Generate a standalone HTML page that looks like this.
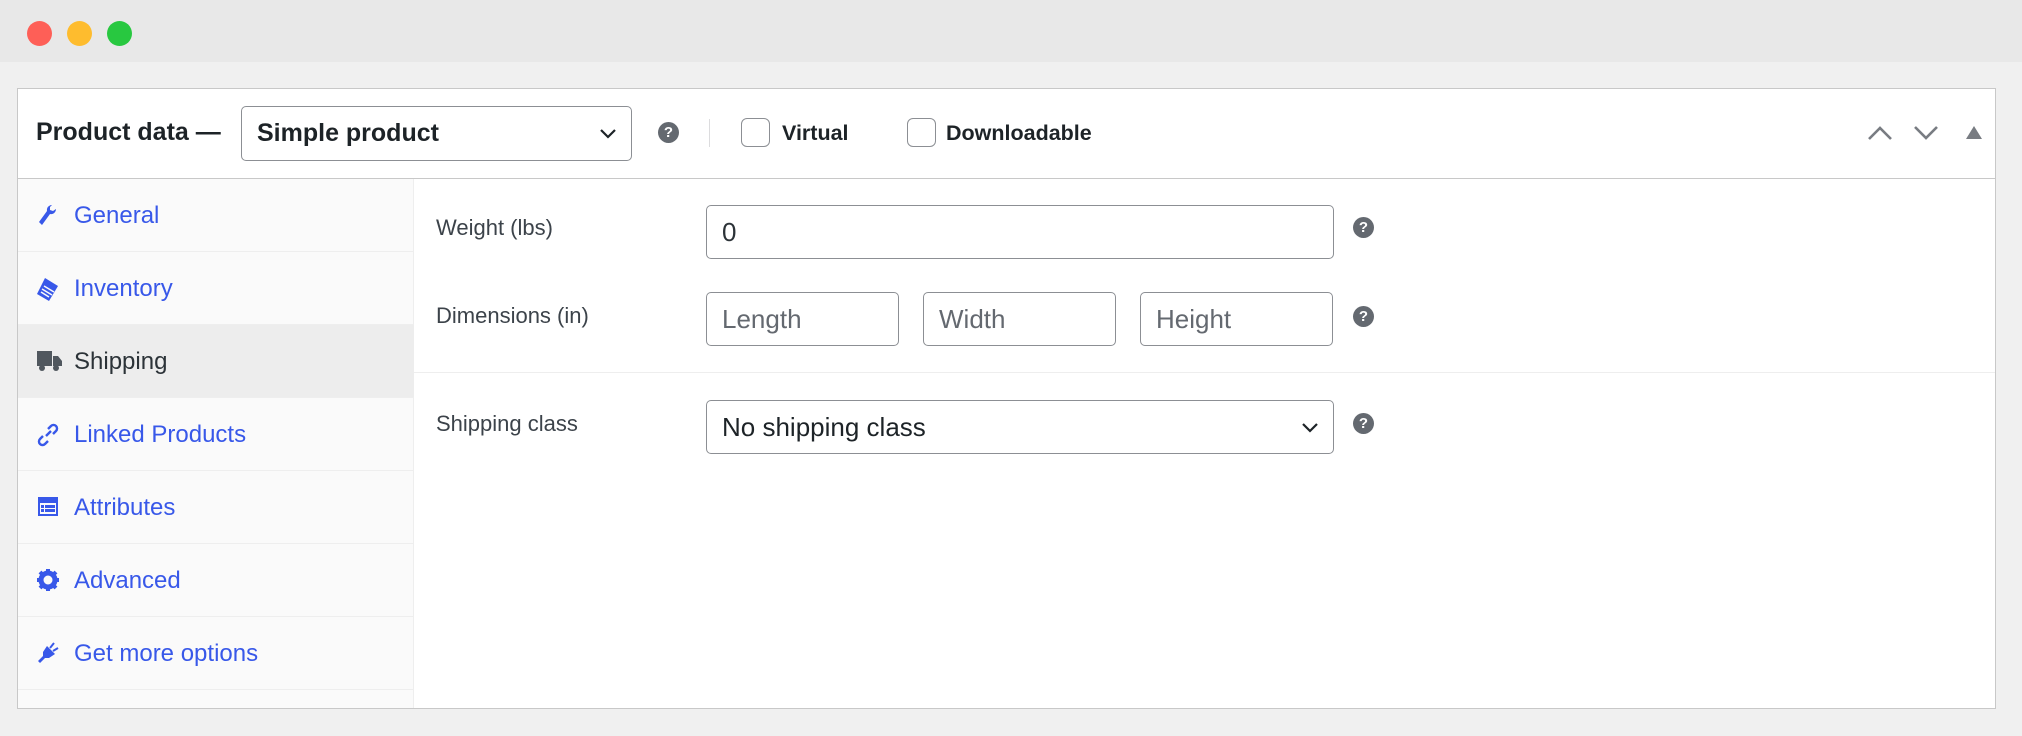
<!DOCTYPE html>
<html><head><style>
*{box-sizing:border-box;margin:0;padding:0}
body{width:2022px;height:736px;background:#f0f0f0;font-family:"Liberation Sans",sans-serif;position:relative;overflow:hidden}
.tb{position:absolute;left:0;top:0;width:2022px;height:62px;background:#e8e8e8}
.dot{position:absolute;top:21px;width:25px;height:25px;border-radius:50%}
.panel{position:absolute;left:17px;top:88px;width:1979px;height:621px;background:#fff;border:1px solid #c8c8c8;overflow:hidden}
.hdr{position:absolute;left:0;top:0;width:100%;height:90px;border-bottom:1px solid #c8c8c8}
.abs{position:absolute}
.side{position:absolute;left:0;top:90px;width:396px;height:530px;background:#fafafa;border-right:1px solid #eee}
.item{position:absolute;left:0;width:396px;height:73px;border-bottom:1px solid #eee;color:#3858e9;font-size:24px;line-height:73px;padding-left:56px}
.item svg{position:absolute;left:19px;top:25px}
.lbl{position:absolute;left:418px;font-size:22px;color:#3c434a}
.inp{position:absolute;border:1px solid #8c8f94;border-radius:5px;font-size:26px;padding-left:15px;color:#2c3338;display:flex;align-items:center}
.ph{color:#646970}
.help{position:absolute;width:21px;height:21px;border-radius:50%;background:#646970;color:#fff;font-size:15px;font-weight:bold;text-align:center;line-height:21px}
.cb{position:absolute;width:29px;height:29px;border:1px solid #8c8f94;border-radius:6px;background:#fff}
</style></head><body>
<div class="tb">
<div class="dot" style="left:27px;background:#fe5f57"></div>
<div class="dot" style="left:67px;background:#febc2e"></div>
<div class="dot" style="left:107px;background:#28c840"></div>
</div>
<div class="panel">
<div class="hdr">
<div class="abs" style="left:18px;top:29px;font-size:25px;font-weight:bold;color:#1d2327">Product data —</div>
<div class="inp" style="left:223px;top:17px;width:391px;height:55px;font-size:25px;color:#1d2327;font-weight:bold">Simple product
<svg class="abs" style="right:14px;top:21px" width="18" height="12" viewBox="0 0 18 12"><path d="M2 2l7 7 7-7" fill="none" stroke="#1d2327" stroke-width="2.2"/></svg></div>
<div class="help" style="left:640px;top:33px">?</div>
<div class="abs" style="left:691px;top:30px;width:1px;height:28px;background:#dcdcde"></div>
<div class="cb" style="left:723px;top:29px"></div>
<div class="abs" style="left:764px;top:32px;font-size:21.5px;font-weight:bold;color:#1d2327">Virtual</div>
<div class="cb" style="left:889px;top:29px"></div>
<div class="abs" style="left:928px;top:32px;font-size:21.5px;font-weight:bold;color:#1d2327">Downloadable</div>
<svg class="abs" style="left:1849px;top:36px" width="26" height="16" viewBox="0 0 26 16"><path d="M2 14L13 3l11 11" fill="none" stroke="#787c82" stroke-width="2.6"/></svg>
<svg class="abs" style="left:1895px;top:36px" width="26" height="16" viewBox="0 0 26 16"><path d="M2 2l11 11L24 2" fill="none" stroke="#787c82" stroke-width="2.6"/></svg>
<svg class="abs" style="left:1948px;top:37px" width="16" height="13" viewBox="0 0 16 13"><path d="M8 0L16 13H0z" fill="#787c82"/></svg>
</div>
<div class="side">
<div class="item" style="top:0"><svg width="20" height="24" viewBox="0 0 20 24"><path d="M15 1a5 5 0 0 0-5 6L2 18l3 3 8-11a5 5 0 0 0 6-5l-3 2-3-1 0-3z" fill="#3858e9"/></svg>General</div>
<div class="item" style="top:73px"><svg width="22" height="26" viewBox="0 0 22 26"><path d="M8 1l13 8-9 15L0 17z" fill="#3858e9"/><path d="M5 12l10 6M7 9l10 6M4 15l8 5" stroke="#fafafa" stroke-width="1.5"/></svg>Inventory</div>
<div class="item" style="top:146px;background:#ededed;color:#2c3338"><svg width="25" height="22" viewBox="0 0 25 22"><path d="M0 1h15v15H0zM16 6h5l4 5v5h-9z" fill="#50575e"/><circle cx="5" cy="18" r="3" fill="#50575e"/><circle cx="19" cy="18" r="3" fill="#50575e"/></svg>Shipping</div>
<div class="item" style="top:219px"><svg width="22" height="24" viewBox="0 0 22 24"><path d="M9 13l5-5M11 6l3-3a3 3 0 0 1 5 5l-3 3M11 18l-3 3a3 3 0 0 1-5-5l3-3" fill="none" stroke="#3858e9" stroke-width="2.4"/></svg>Linked Products</div>
<div class="item" style="top:292px"><svg width="22" height="22" viewBox="0 0 22 22"><rect x="1" y="1" width="20" height="19" fill="#3858e9"/><rect x="3" y="7" width="16" height="11" fill="#fafafa"/><path d="M4 9h3v3H4zM8 9h10v3H8zM4 13h3v3H4zM8 13h10v3H8z" fill="#3858e9"/></svg>Attributes</div>
<div class="item" style="top:365px"><svg width="22" height="22" viewBox="0 0 22 22"><circle cx="11" cy="11" r="7" fill="none" stroke="#3858e9" stroke-width="5"/><path d="M11 0v6M11 16v6M0 11h6M16 11h6M3 3l4 4M15 15l4 4M3 19l4-4M15 7l4-4" stroke="#3858e9" stroke-width="4"/></svg>Advanced</div>
<div class="item" style="top:438px"><svg width="22" height="24" viewBox="0 0 22 24"><path d="M10 4l8 8-6 4-4 0-5 5-2-2 5-5 0-4z" fill="#3858e9"/><path d="M13 6l4-5M16 9l5-3" stroke="#3858e9" stroke-width="2"/></svg>Get more options</div>
</div>
<div class="lbl" style="top:126px">Weight (lbs)</div>
<div class="inp" style="left:688px;top:116px;width:628px;height:54px">0</div>
<div class="help" style="left:1335px;top:128px">?</div>
<div class="lbl" style="top:214px">Dimensions (in)</div>
<div class="inp ph" style="left:688px;top:203px;width:193px;height:54px">Length</div>
<div class="inp ph" style="left:905px;top:203px;width:193px;height:54px">Width</div>
<div class="inp ph" style="left:1122px;top:203px;width:193px;height:54px">Height</div>
<div class="help" style="left:1335px;top:217px">?</div>
<div class="abs" style="left:396px;top:283px;width:1582px;height:1px;background:#eee"></div>
<div class="lbl" style="top:322px">Shipping class</div>
<div class="inp" style="left:688px;top:311px;width:628px;height:54px;color:#1d2327">No shipping class
<svg class="abs" style="right:14px;top:21px" width="18" height="12" viewBox="0 0 18 12"><path d="M2 2l7 7 7-7" fill="none" stroke="#1d2327" stroke-width="2.2"/></svg></div>
<div class="help" style="left:1335px;top:324px">?</div>
</div>
</body></html>
